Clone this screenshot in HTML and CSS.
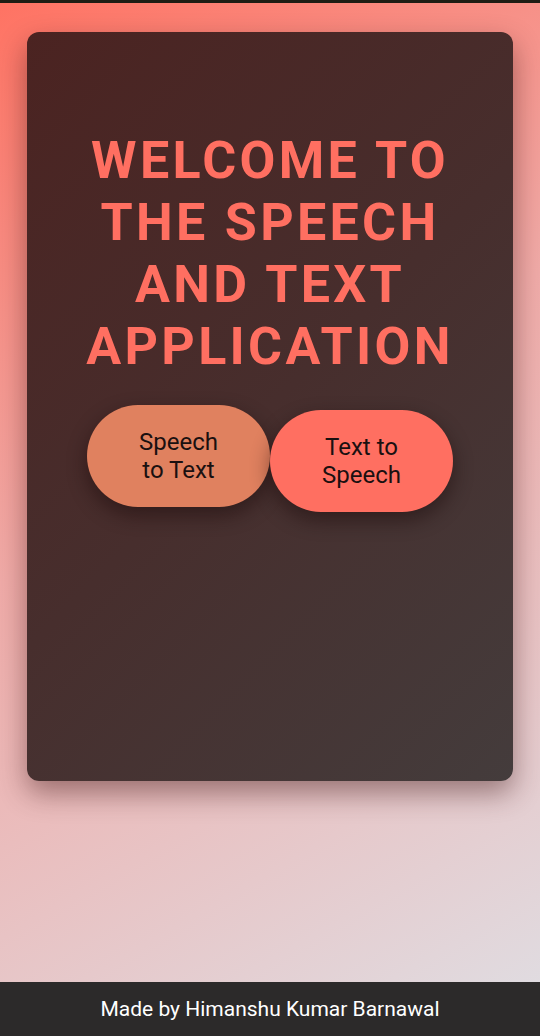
FILE: index.html
```html
<!DOCTYPE html>
<html>
<head>
<meta charset="utf-8">
<link rel="stylesheet" href="styles.css">
</head>
<body>
<div class="topbar"></div>
<main class="stage">
  <section class="card">
    <h1 class="title">WELCOME TO THE SPEECH AND TEXT APPLICATION</h1>
    <div class="actions">
      <button class="btn btn-stt">Speech to Text</button>
      <button class="btn btn-tts">Text to Speech</button>
    </div>
  </section>
</main>
<footer class="footer">Made by Himanshu Kumar Barnawal</footer>
</body>
</html>
```
FILE: styles.css
```css
* { box-sizing: border-box; }
html, body { margin: 0; padding: 0; }
body {
  width: 540px;
  height: 1036px;
  display: flex;
  flex-direction: column;
  font-family: Roboto, "Liberation Sans", sans-serif;
  overflow: hidden;
}
.topbar {
  height: 3px;
  background: #1f1d14;
  flex: none;
}
.stage {
  flex: 1;
  background: linear-gradient(150deg, #ff7363 0%, #f0aba8 45%, #e0dbe0 100%);
  padding: 29px 27px 0;
}
.card {
  height: 749px;
  border-radius: 12px;
  background: linear-gradient(135deg, #4b2321 0%, #472e2d 50%, #443c3c 100%);
  box-shadow: 0 12px 28px rgba(60, 20, 20, 0.45);
  padding: 98px 40px 0;
  display: flex;
  flex-direction: column;
  align-items: center;
}
.title {
  margin: 0;
  width: 400px;
  text-align: center;
  color: #ff6f61;
  font-family: Roboto, "Liberation Sans", sans-serif;
  font-weight: 700;
  font-size: 52px;
  line-height: 62px;
  letter-spacing: 3.3px;
}
.actions {
  margin-top: 27px;
  display: flex;
  align-items: flex-start;
}
.btn {
  width: 183px;
  height: 102px;
  border: none;
  border-radius: 51px;
  font-family: Roboto, "Liberation Sans", sans-serif;
  font-size: 24px;
  line-height: 28px;
  color: #1a1010;
  padding: 0 44px;
  box-shadow: 0 8px 20px rgba(20, 5, 5, 0.45);
}
.btn-stt {
  background: #e0815f;
}
.btn-tts {
  background: #ff6f61;
  margin-top: 5px;
}
.footer {
  flex: none;
  height: 54px;
  background: #2c2a2a;
  color: #ffffff;
  font-size: 21px;
  display: flex;
  align-items: center;
  justify-content: center;
}
```
